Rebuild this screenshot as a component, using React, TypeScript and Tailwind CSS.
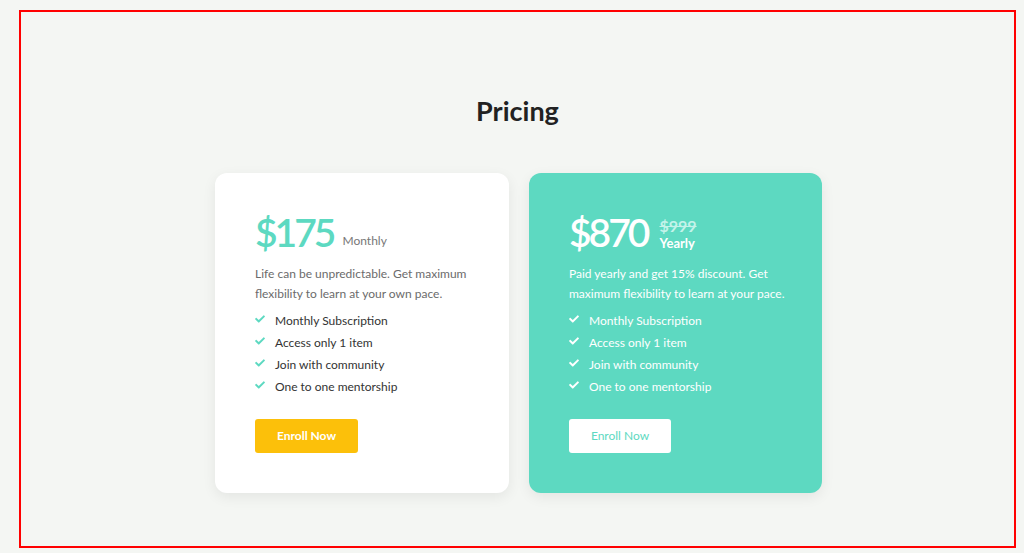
import React from "react";

const Check = ({ className }: { className: string }) => (
  <svg viewBox="0 0 512 512" className={className} fill="currentColor">
    <path d="M173.898 439.404l-166.4-166.4c-9.997-9.997-9.997-26.206 0-36.204l36.203-36.204c9.997-9.998 26.207-9.998 36.204 0L192 312.69 432.095 72.596c9.997-9.997 26.207-9.997 36.204 0l36.203 36.204c9.997 9.997 9.997 26.206 0 36.204l-294.4 294.401c-9.998 9.997-26.207 9.997-36.204-.001z" />
  </svg>
);

const features = ["Monthly Subscription", "Access only 1 item", "Join with community", "One to one mentorship"];

export default function App() {
  return (
    <div
      className="w-[1024px] h-[553px] bg-[#f4f6f3] pl-[19px] pt-[10px]"
      style={{ fontFamily: 'Lato, "Open Sans", sans-serif' }}
    >
      <div className="w-[997px] h-[538px] border-2 border-[#ff0000] flex flex-col items-center">
        <h2 className="mt-[84px] text-[27px] leading-[30px] font-bold text-[#222]">Pricing</h2>
        <div className="mt-[47px] flex gap-[20px] ml-[2px]">
          <div className="w-[294px] h-[320px] bg-white rounded-[12px] shadow-[0_4px_14px_rgba(0,0,0,0.07)] px-[40px] pt-[36px]">
            <div className="flex items-end">
              <span className="text-[39px] leading-[46px] font-semibold text-[#5dd9c1] tracking-[-3px]">$175</span>
              <span className="ml-[9px] mb-[5px] text-[12px] text-[#777]">Monthly</span>
            </div>
            <p className="mt-[9px] text-[12px] leading-[20px] text-[#6b6b6b] whitespace-nowrap">
              Life can be unpredictable. Get maximum
              <br />
              flexibility to learn at your own pace.
            </p>
            <ul className="mt-[8px] flex flex-col gap-[4px]">
              {features.map((f) => (
                <li key={f} className="flex items-center h-[18px] text-[12px] text-[#333]">
                  <Check className="w-[10px] h-[10px] text-[#5dd9c1] mr-[10px] mb-[4px]" />
                  {f}
                </li>
              ))}
            </ul>
            <button className="mt-[23px] w-[103px] h-[34px] rounded-[3px] bg-[#fcc00a] text-white text-[12px] font-bold">
              Enroll Now
            </button>
          </div>
          <div className="w-[293px] h-[320px] bg-[#5dd9c1] rounded-[12px] shadow-[0_4px_14px_rgba(0,0,0,0.07)] px-[40px] pt-[36px]">
            <div className="flex items-end">
              <span className="text-[39px] leading-[46px] font-semibold text-white tracking-[-3px]">$870</span>
              <div className="ml-[12px] mb-[4px] flex flex-col">
                <span className="text-[16px] leading-[18px] font-bold text-[#c4f3ea] line-through">$999</span>
                <span className="text-[13px] leading-[16px] font-bold text-white">Yearly</span>
              </div>
            </div>
            <p className="mt-[9px] text-[12px] leading-[20px] text-white whitespace-nowrap">
              Paid yearly and get 15% discount. Get
              <br />
              maximum flexibility to learn at your pace.
            </p>
            <ul className="mt-[8px] flex flex-col gap-[4px]">
              {features.map((f) => (
                <li key={f} className="flex items-center h-[18px] text-[12px] text-white">
                  <Check className="w-[10px] h-[10px] text-white mr-[10px] mb-[4px]" />
                  {f}
                </li>
              ))}
            </ul>
            <button className="mt-[23px] w-[102px] h-[34px] rounded-[3px] bg-white text-[#5dd9c1] text-[12px]">
              Enroll Now
            </button>
          </div>
        </div>
      </div>
    </div>
  );
}
